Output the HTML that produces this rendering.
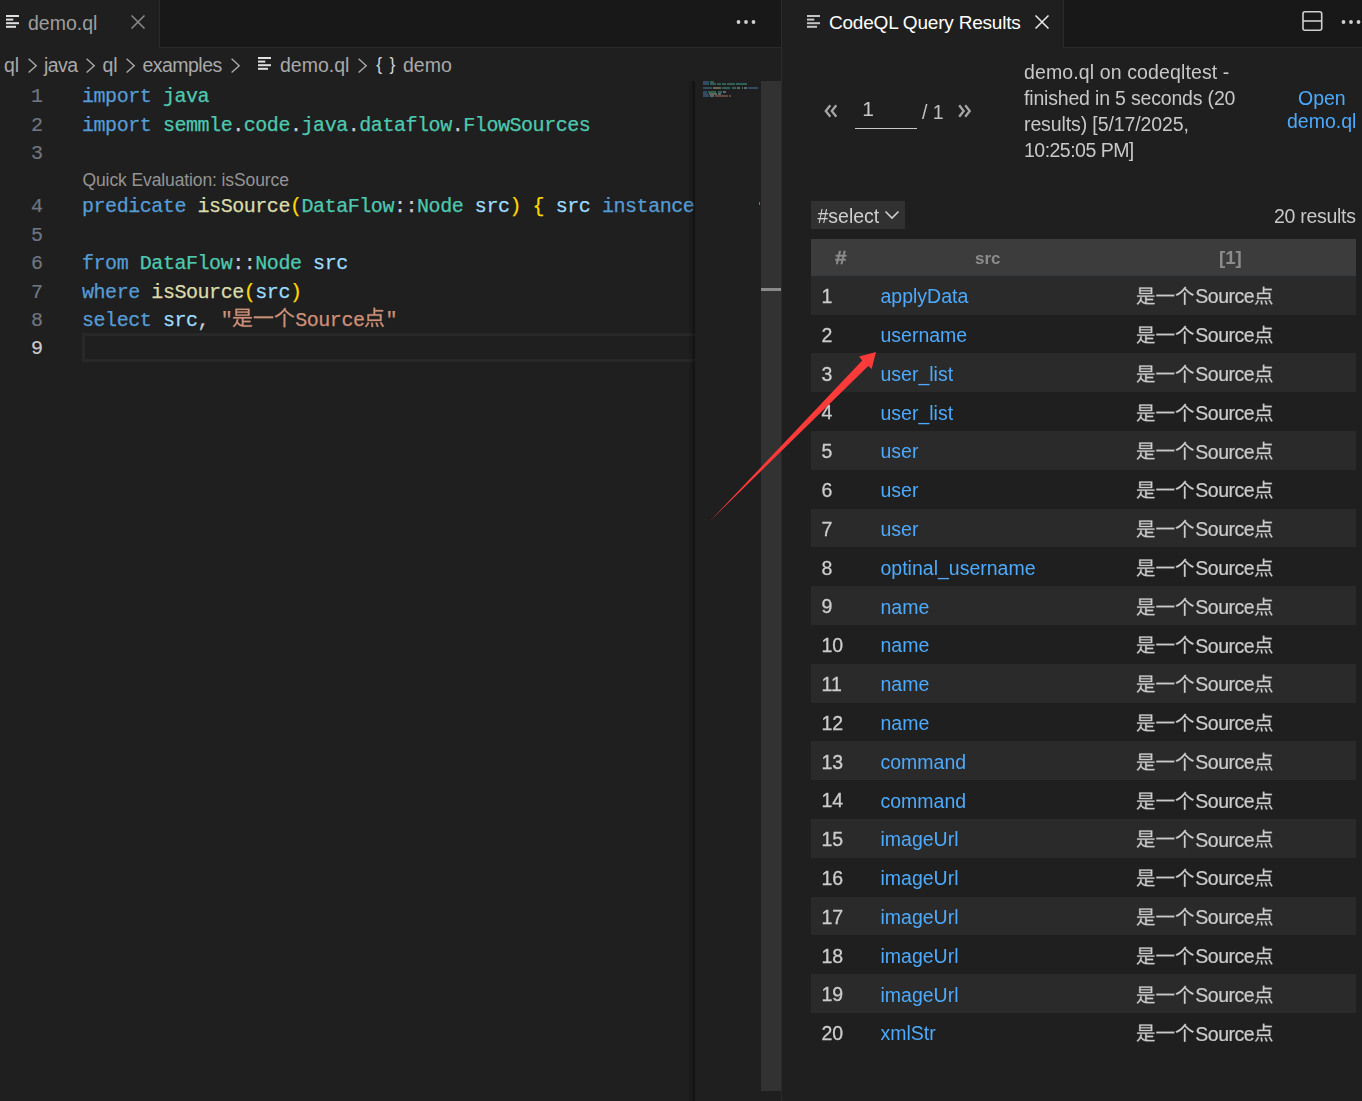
<!DOCTYPE html>
<html><head><meta charset="utf-8"><title>demo.ql</title>
<style>
html,body{margin:0;padding:0;background:#1f1f1f;}
body{width:1362px;height:1101px;position:relative;overflow:hidden;font-family:"Liberation Sans",sans-serif;color:#cccccc;}
div,span,svg{position:absolute;box-sizing:border-box;white-space:pre;}
.cl span{position:static}
#ltabs{left:0;top:0;width:781px;height:48px;background:#181818;border-bottom:1px solid #2b2b2b}
#ltab{left:0;top:0;width:160px;height:48px;background:#1f1f1f;border-right:1px solid #2b2b2b}
#divider{left:781px;top:0;width:1px;height:1101px;background:#2b2b2b}
.ln{left:0;width:42.5px;text-align:right;font-family:"Liberation Mono",monospace;font-size:20px;letter-spacing:-0.45px;line-height:28.5px;height:28.5px;color:#6e7681;-webkit-text-stroke-width:0.2px}
.ln.act{color:#cccccc}
.cl{left:82px;width:613px;overflow:hidden;font-family:"Liberation Mono",monospace;font-size:20px;letter-spacing:-0.45px;line-height:28.5px;height:28.5px;color:#cccccc;-webkit-text-stroke-width:0.25px}
.k{color:#569cd6}.t{color:#4ec9b0}.f{color:#dcdcaa}.v{color:#9cdcfe}.s{color:#ce9178}.y{color:#ffd700}.p{color:#cccccc}
.cl .cj{display:inline-block;height:1px}
#curline{left:82px;top:333px;width:613px;height:29px;border:3px solid #282828;border-right:none}
#mmshadow{left:688px;top:81px;width:7px;height:1020px;background:linear-gradient(90deg,rgba(0,0,0,0),rgba(0,0,0,.12) 40%,rgba(0,0,0,.45))}
#sbar{left:760.8px;top:81px;width:20.2px;height:1010px;background:#323232}
#sbarend{left:760px;top:1091px;width:21px;height:10px;background:#1f1f1f}
#cursormark{left:761px;top:288px;width:20px;height:3px;background:#8a8a8a}
#peek{left:759px;top:202px;width:1px;height:3px;background:#35927f}
.mm{height:2px;opacity:.55}
#rtabs{left:782px;top:0;width:580px;height:48px;background:#181818;border-bottom:1px solid #2b2b2b}
#rtab{left:0;top:0;width:282px;height:48px;background:#1f1f1f;border-right:1px solid #2b2b2b}
#webview{left:0;top:0;width:1362px;height:1101px;will-change:transform}
#uline{left:855px;top:127.9px;width:62px;height:1.5px;background:#c8c8c8}
#sel{left:811px;top:201px;width:94px;height:28px;background:#313131}
#thead{left:811px;top:239px;width:545px;height:36.75px;background:#3c3c3c;border-bottom:1px solid #363b40}
.row{left:811px;width:545px;height:38.8px}
.row.odd{background:#2a2a2a}
.row .num{left:10.5px;top:7.3px;-webkit-text-stroke:0.3px #cccccc;font-size:19.5px;line-height:26px;color:#cccccc}
.row .lk{left:69.5px;top:7.5px;font-size:19.5px;line-height:26px;color:#4daafc;letter-spacing:0px}
.row .src{left:384.3px;top:7.6px;-webkit-text-stroke:0.2px #cccccc;font-size:19.5px;line-height:26px;color:#cccccc;letter-spacing:-0.5px}
.row .cj1{left:324.6px;top:10.4px;width:58.5px;height:19.5px;fill:#cccccc;stroke:#cccccc;stroke-width:16}
.row .cj2{left:443px;top:10.4px;width:19.5px;height:19.5px;fill:#cccccc;stroke:#cccccc;stroke-width:16}
</style></head><body>
<svg width="0" height="0" style="left:0;top:0"><defs><symbol id="g1" viewBox="0 0 1000 1000"><path d="M236 273H757V355H236ZM236 138H757V219H236ZM164 81V412H833V81ZM231 581C205 727 141 840 35 909C52 920 81 948 92 961C158 914 210 850 248 771C330 909 459 940 661 940H935C939 919 951 886 963 868C911 869 702 870 664 869C622 869 582 868 546 864V726H878V660H546V548H943V481H59V548H471V851C384 829 320 782 281 690C291 659 299 626 306 591Z"/></symbol><symbol id="g2" viewBox="0 0 1000 1000"><path d="M44 449V531H960V449Z"/></symbol><symbol id="g3" viewBox="0 0 1000 1000"><path d="M460 334V959H538V334ZM506 39C406 206 224 352 35 434C56 452 78 481 91 503C245 428 393 312 501 174C634 330 766 426 914 504C926 480 949 452 969 436C815 361 673 267 545 114L573 70Z"/></symbol><symbol id="g4" viewBox="0 0 1000 1000"><path d="M237 415H760V594H237ZM340 752C353 817 361 901 361 951L437 941C436 893 426 810 411 746ZM547 753C576 815 606 899 617 949L690 930C678 880 646 799 615 738ZM751 745C801 808 857 897 880 952L951 922C926 867 868 782 818 719ZM177 725C146 799 95 880 42 926L110 959C165 906 216 822 248 744ZM166 344V664H835V344H530V217H910V146H530V40H455V344Z"/></symbol></defs></svg>
<div id="ltabs"><div id="ltab"></div></div>
<svg style="left:5.5px;top:15px" width="14" height="14" viewBox="0 0 14 14" fill="#e0e0e0"><rect x="0" y="0" width="13" height="2"/><rect x="0" y="3.6" width="7.3" height="2"/><rect x="0" y="7.2" width="13" height="2"/><rect x="0" y="10.8" width="10" height="2"/></svg><span id="ltxt" class="" style="left:28px;top:10.24px;font-size:19.5px;line-height:26px;height:26px;color:#9d9d9d;">demo.ql</span><svg style="left:130.5px;top:15.2px" width="14" height="14" viewBox="0 0 14 14" fill="none" stroke="#8c8c8c" stroke-width="1.5"><path d="M0.5 0.5 L13.5 13.5 M13.5 0.5 L0.5 13.5"/></svg><svg style="left:734px;top:18px" width="24" height="8" viewBox="0 0 24 8" fill="#d0d0d0"><circle cx="4.5" cy="4" r="1.9"/><circle cx="12" cy="4" r="1.9"/><circle cx="19.5" cy="4" r="1.9"/></svg><span id="b1" class="" style="left:4px;top:51.64px;font-size:19.5px;line-height:26px;height:26px;color:#a9a9a9;">ql</span><svg style="left:28px;top:57.8px" width="11" height="16" viewBox="0 0 11 16" fill="none" stroke="#a9a9a9" stroke-width="1.4"><path d="M0.6 0.8 L8.2 7.7 L0.6 14.6"/></svg><span id="b2" class="" style="left:44px;top:51.64px;font-size:19.5px;line-height:26px;height:26px;color:#a9a9a9;letter-spacing:-0.57px;">java</span><svg style="left:86px;top:57.8px" width="11" height="16" viewBox="0 0 11 16" fill="none" stroke="#a9a9a9" stroke-width="1.4"><path d="M0.6 0.8 L8.2 7.7 L0.6 14.6"/></svg><span id="b3" class="" style="left:102.5px;top:51.64px;font-size:19.5px;line-height:26px;height:26px;color:#a9a9a9;">ql</span><svg style="left:126px;top:57.8px" width="11" height="16" viewBox="0 0 11 16" fill="none" stroke="#a9a9a9" stroke-width="1.4"><path d="M0.6 0.8 L8.2 7.7 L0.6 14.6"/></svg><span id="b4" class="" style="left:142.4px;top:51.64px;font-size:19.5px;line-height:26px;height:26px;color:#a9a9a9;letter-spacing:-0.52px;">examples</span><svg style="left:230.5px;top:57.8px" width="11" height="16" viewBox="0 0 11 16" fill="none" stroke="#a9a9a9" stroke-width="1.4"><path d="M0.6 0.8 L8.2 7.7 L0.6 14.6"/></svg><svg style="left:257.5px;top:57.3px" width="14" height="14" viewBox="0 0 14 14" fill="#e0e0e0"><rect x="0" y="0" width="13" height="2"/><rect x="0" y="3.6" width="7.3" height="2"/><rect x="0" y="7.2" width="13" height="2"/><rect x="0" y="10.8" width="10" height="2"/></svg><span id="b5" class="" style="left:280px;top:51.64px;font-size:19.5px;line-height:26px;height:26px;color:#a9a9a9;">demo.ql</span><svg style="left:358px;top:57.8px" width="11" height="16" viewBox="0 0 11 16" fill="none" stroke="#a9a9a9" stroke-width="1.4"><path d="M0.6 0.8 L8.2 7.7 L0.6 14.6"/></svg><span id="b6" class="" style="left:376.3px;top:50.54px;font-size:17.5px;line-height:26px;height:26px;color:#d4d4d4;letter-spacing:1.2px;">{ }</span><span id="b7" class="" style="left:403px;top:51.64px;font-size:19.5px;line-height:26px;height:26px;color:#a9a9a9;">demo</span>
<div class="ln" style="top:83px">1</div><div class="cl" id="cl1" style="top:83px"><span class="k">import</span> <span class="t">java</span></div><div class="ln" style="top:111.5px">2</div><div class="cl" id="cl2" style="top:111.5px"><span class="k">import</span> <span class="t">semmle</span><span class="p">.</span><span class="t">code</span><span class="p">.</span><span class="t">java</span><span class="p">.</span><span class="t">dataflow</span><span class="p">.</span><span class="t">FlowSources</span></div><div class="ln" style="top:140px">3</div><div class="ln" style="top:193px">4</div><div class="cl" id="cl4" style="top:193px"><span class="k">predicate</span> <span class="f">isSource</span><span class="y">(</span><span class="t">DataFlow</span><span class="p">::</span><span class="t">Node</span> <span class="v">src</span><span class="y">)</span> <span class="y">{</span> <span class="v">src</span> <span class="k">instanceof</span> <span class="t">RemoteFlowSource</span> <span class="y">}</span></div><div class="ln" style="top:221.5px">5</div><div class="ln" style="top:250px">6</div><div class="cl" id="cl6" style="top:250px"><span class="k">from</span> <span class="t">DataFlow</span><span class="p">::</span><span class="t">Node</span> <span class="v">src</span></div><div class="ln" style="top:278.5px">7</div><div class="cl" id="cl7" style="top:278.5px"><span class="k">where</span> <span class="f">isSource</span><span class="y">(</span><span class="v">src</span><span class="y">)</span></div><div class="ln" style="top:307px">8</div><div class="cl" id="cl8" style="top:307px"><span class="k">select</span> <span class="v">src</span><span class="p">,</span> <span class="s">"</span><span class="cj" style="width:63px"></span><span class="s">Source</span><span class="cj" style="width:21px"></span><span class="s">"</span></div><div class="ln act" style="top:334.5px">9</div><svg id="cjc1" style="left:232.15px;top:307.4px;width:63px;height:21px;fill:#ce9178;stroke:#ce9178;stroke-width:16" viewBox="0 0 3000 1000"><use href="#g1" width="1000" height="1000"/><use href="#g2" x="1000" width="1000" height="1000"/><use href="#g3" x="2000" width="1000" height="1000"/></svg><svg id="cjc2" style="left:364.45px;top:307.4px;width:21px;height:21px;fill:#ce9178;stroke:#ce9178;stroke-width:16" viewBox="0 0 1000 1000"><use href="#g4" width="1000" height="1000"/></svg><div id="curline"></div><span id="lens" class="" style="left:82.5px;top:166.84px;font-size:17.5px;line-height:26px;height:26px;color:#949494;letter-spacing:-0.11px;">Quick Evaluation: isSource</span>
<div id="mmshadow"></div><div id="sbar"></div><div id="sbarend"></div><div id="cursormark"></div><div id="peek"></div><div class="mm" style="left:703.0px;top:81.0px;width:6.0px;background:#3f6f99"></div><div class="mm" style="left:710.0px;top:81.0px;width:4.0px;background:#3a9383"></div><div class="mm" style="left:703.0px;top:83.0px;width:6.0px;background:#3f6f99"></div><div class="mm" style="left:710.0px;top:83.0px;width:6.0px;background:#3a9383"></div><div class="mm" style="left:717.0px;top:83.0px;width:4.0px;background:#3a9383"></div><div class="mm" style="left:722.0px;top:83.0px;width:4.0px;background:#3a9383"></div><div class="mm" style="left:727.0px;top:83.0px;width:8.0px;background:#3a9383"></div><div class="mm" style="left:736.0px;top:83.0px;width:11.0px;background:#3a9383"></div><div class="mm" style="left:703.0px;top:87.0px;width:9.0px;background:#3f6f99"></div><div class="mm" style="left:713.0px;top:87.0px;width:8.0px;background:#9f9f7d"></div><div class="mm" style="left:722.0px;top:87.0px;width:8.0px;background:#3a9383"></div><div class="mm" style="left:732.0px;top:87.0px;width:4.0px;background:#3a9383"></div><div class="mm" style="left:737.0px;top:87.0px;width:3.0px;background:#7aa6c0"></div><div class="mm" style="left:742.0px;top:87.0px;width:1.0px;background:#b09a10"></div><div class="mm" style="left:744.0px;top:87.0px;width:3.0px;background:#7aa6c0"></div><div class="mm" style="left:748.0px;top:87.0px;width:10.0px;background:#3f6f99"></div><div class="mm" style="left:703.0px;top:91.0px;width:4.0px;background:#3f6f99"></div><div class="mm" style="left:708.0px;top:91.0px;width:8.0px;background:#3a9383"></div><div class="mm" style="left:718.0px;top:91.0px;width:4.0px;background:#3a9383"></div><div class="mm" style="left:723.0px;top:91.0px;width:3.0px;background:#7aa6c0"></div><div class="mm" style="left:703.0px;top:93.0px;width:5.0px;background:#3f6f99"></div><div class="mm" style="left:709.0px;top:93.0px;width:8.0px;background:#9f9f7d"></div><div class="mm" style="left:718.0px;top:93.0px;width:3.0px;background:#7aa6c0"></div><div class="mm" style="left:703.0px;top:95.0px;width:6.0px;background:#3f6f99"></div><div class="mm" style="left:710.0px;top:95.0px;width:4.0px;background:#7aa6c0"></div><div class="mm" style="left:715.0px;top:95.0px;width:1.0px;background:#96695a"></div><div class="mm" style="left:716.0px;top:95.0px;width:6.0px;background:#96695a"></div><div class="mm" style="left:722.0px;top:95.0px;width:6.0px;background:#96695a"></div><div class="mm" style="left:729.0px;top:95.0px;width:2.0px;background:#96695a"></div>
<div id="divider"></div>
<div id="rtabs"><div id="rtab"></div></div>
<svg style="left:807px;top:15.3px" width="14" height="14" viewBox="0 0 14 14" fill="#c5c5c5"><rect x="0" y="0" width="13" height="2"/><rect x="0" y="3.6" width="7.3" height="2"/><rect x="0" y="7.2" width="13" height="2"/><rect x="0" y="10.8" width="10" height="2"/></svg><span id="rtxt" class="" style="left:829px;top:10.42px;font-size:19px;line-height:26px;height:26px;color:#ffffff;letter-spacing:-0.21px;">CodeQL Query Results</span><svg style="left:1035px;top:15.3px" width="14" height="14" viewBox="0 0 14 14" fill="none" stroke="#ececec" stroke-width="1.5"><path d="M0.5 0.5 L13.5 13.5 M13.5 0.5 L0.5 13.5"/></svg><svg style="left:1301px;top:10px" width="23" height="23" viewBox="0 0 23 23" fill="none" stroke="#d0d0d0" stroke-width="1.6"><rect x="2" y="1.75" width="18.7" height="18.5" rx="2"/><path d="M2 11 H20.7"/></svg><svg style="left:1338.5px;top:18px" width="24" height="8" viewBox="0 0 24 8" fill="#d0d0d0"><circle cx="4.5" cy="4" r="1.9"/><circle cx="12" cy="4" r="1.9"/><circle cx="19.5" cy="4" r="1.9"/></svg>
<div id="webview"><svg style="left:823px;top:104px" width="15" height="14" viewBox="823 104 15 14" fill="none" stroke="#a6a6a6" stroke-width="2.3"><path d="M830.3 105.3 L825.8 111 L830.3 116.7 M836.3 105.3 L831.8 111 L836.3 116.7"/></svg><span id="pg" class="" style="left:862.3px;top:95.92px;font-size:21px;line-height:26px;height:26px;color:#c8c8c8;">1</span><div id="uline"></div><span id="of" class="" style="left:922px;top:98.64px;font-size:19.5px;line-height:26px;height:26px;color:#c0c0c0;">/ 1</span><svg style="left:957px;top:104px" width="15" height="14" viewBox="957 104 15 14" fill="none" stroke="#a6a6a6" stroke-width="2.3"><path d="M959.2 105.3 L963.7 111 L959.2 116.7 M965.2 105.3 L969.7 111 L965.2 116.7"/></svg><span id="m1" class="" style="left:1024px;top:58.84px;font-size:19.5px;line-height:26px;height:26px;color:#c8c8c8;letter-spacing:0.12px;">demo.ql on codeqltest -</span><span id="m2" class="" style="left:1024px;top:84.84px;font-size:19.5px;line-height:26px;height:26px;color:#c8c8c8;letter-spacing:-0.18px;">finished in 5 seconds (20</span><span id="m3" class="" style="left:1024px;top:110.84px;font-size:19.5px;line-height:26px;height:26px;color:#c8c8c8;letter-spacing:-0.11px;">results) [5/17/2025,</span><span id="m4" class="" style="left:1024px;top:136.84px;font-size:19.5px;line-height:26px;height:26px;color:#c8c8c8;letter-spacing:-0.52px;">10:25:05 PM]</span><span id="o1" class="" style="left:1298px;top:84.84px;font-size:19.5px;line-height:26px;height:26px;color:#4daafc;">Open</span><span id="o2" class="" style="left:1287px;top:107.64px;font-size:19.5px;line-height:26px;height:26px;color:#4daafc;">demo.ql</span><div id="sel"></div><span id="seltxt" class="" style="left:817.5px;top:203.24px;font-size:19.5px;line-height:26px;height:26px;color:#d0d0d0;">#select</span><svg style="left:884px;top:210px" width="16" height="10" viewBox="0 0 16 10" fill="none" stroke="#d0d0d0" stroke-width="1.6"><path d="M1.5 1.5 L8 8 L14.5 1.5"/></svg><span id="nres" class="" style="left:1274px;top:203.14px;font-size:19.5px;line-height:26px;height:26px;color:#c8c8c8;letter-spacing:-0.29px;">20 results</span><div id="thead"></div><span id="h1" class="" style="left:835.3px;top:245.19px;font-size:18.5px;line-height:26px;height:26px;color:#8c8c8c;font-weight:bold;transform:scaleX(1.12);transform-origin:0 0;-webkit-text-stroke:0.4px #8c8c8c;">#</span><span id="h2" class="" style="left:975px;top:246.01px;font-size:17px;line-height:26px;height:26px;color:#8c8c8c;font-weight:bold;">src</span><span id="h3" class="" style="left:1219px;top:245.42px;font-size:18.7px;line-height:26px;height:26px;color:#8c8c8c;font-weight:bold;">[1]</span>
<div class="row odd" style="top:275.75px"><span class="num">1</span><span class="lk">applyData</span><svg class="cj1" viewBox="0 0 3000 1000"><use href="#g1" width="1000" height="1000"/><use href="#g2" x="1000" width="1000" height="1000"/><use href="#g3" x="2000" width="1000" height="1000"/></svg><span class="src">Source</span><svg class="cj2" viewBox="0 0 1000 1000"><use href="#g4" width="1000" height="1000"/></svg></div><div class="row" style="top:314.55px"><span class="num">2</span><span class="lk">username</span><svg class="cj1" viewBox="0 0 3000 1000"><use href="#g1" width="1000" height="1000"/><use href="#g2" x="1000" width="1000" height="1000"/><use href="#g3" x="2000" width="1000" height="1000"/></svg><span class="src">Source</span><svg class="cj2" viewBox="0 0 1000 1000"><use href="#g4" width="1000" height="1000"/></svg></div><div class="row odd" style="top:353.35px"><span class="num">3</span><span class="lk">user_list</span><svg class="cj1" viewBox="0 0 3000 1000"><use href="#g1" width="1000" height="1000"/><use href="#g2" x="1000" width="1000" height="1000"/><use href="#g3" x="2000" width="1000" height="1000"/></svg><span class="src">Source</span><svg class="cj2" viewBox="0 0 1000 1000"><use href="#g4" width="1000" height="1000"/></svg></div><div class="row" style="top:392.15px"><span class="num">4</span><span class="lk">user_list</span><svg class="cj1" viewBox="0 0 3000 1000"><use href="#g1" width="1000" height="1000"/><use href="#g2" x="1000" width="1000" height="1000"/><use href="#g3" x="2000" width="1000" height="1000"/></svg><span class="src">Source</span><svg class="cj2" viewBox="0 0 1000 1000"><use href="#g4" width="1000" height="1000"/></svg></div><div class="row odd" style="top:430.95px"><span class="num">5</span><span class="lk">user</span><svg class="cj1" viewBox="0 0 3000 1000"><use href="#g1" width="1000" height="1000"/><use href="#g2" x="1000" width="1000" height="1000"/><use href="#g3" x="2000" width="1000" height="1000"/></svg><span class="src">Source</span><svg class="cj2" viewBox="0 0 1000 1000"><use href="#g4" width="1000" height="1000"/></svg></div><div class="row" style="top:469.75px"><span class="num">6</span><span class="lk">user</span><svg class="cj1" viewBox="0 0 3000 1000"><use href="#g1" width="1000" height="1000"/><use href="#g2" x="1000" width="1000" height="1000"/><use href="#g3" x="2000" width="1000" height="1000"/></svg><span class="src">Source</span><svg class="cj2" viewBox="0 0 1000 1000"><use href="#g4" width="1000" height="1000"/></svg></div><div class="row odd" style="top:508.54999999999995px"><span class="num">7</span><span class="lk">user</span><svg class="cj1" viewBox="0 0 3000 1000"><use href="#g1" width="1000" height="1000"/><use href="#g2" x="1000" width="1000" height="1000"/><use href="#g3" x="2000" width="1000" height="1000"/></svg><span class="src">Source</span><svg class="cj2" viewBox="0 0 1000 1000"><use href="#g4" width="1000" height="1000"/></svg></div><div class="row" style="top:547.3499999999999px"><span class="num">8</span><span class="lk">optinal_username</span><svg class="cj1" viewBox="0 0 3000 1000"><use href="#g1" width="1000" height="1000"/><use href="#g2" x="1000" width="1000" height="1000"/><use href="#g3" x="2000" width="1000" height="1000"/></svg><span class="src">Source</span><svg class="cj2" viewBox="0 0 1000 1000"><use href="#g4" width="1000" height="1000"/></svg></div><div class="row odd" style="top:586.15px"><span class="num">9</span><span class="lk">name</span><svg class="cj1" viewBox="0 0 3000 1000"><use href="#g1" width="1000" height="1000"/><use href="#g2" x="1000" width="1000" height="1000"/><use href="#g3" x="2000" width="1000" height="1000"/></svg><span class="src">Source</span><svg class="cj2" viewBox="0 0 1000 1000"><use href="#g4" width="1000" height="1000"/></svg></div><div class="row" style="top:624.95px"><span class="num">10</span><span class="lk">name</span><svg class="cj1" viewBox="0 0 3000 1000"><use href="#g1" width="1000" height="1000"/><use href="#g2" x="1000" width="1000" height="1000"/><use href="#g3" x="2000" width="1000" height="1000"/></svg><span class="src">Source</span><svg class="cj2" viewBox="0 0 1000 1000"><use href="#g4" width="1000" height="1000"/></svg></div><div class="row odd" style="top:663.75px"><span class="num">11</span><span class="lk">name</span><svg class="cj1" viewBox="0 0 3000 1000"><use href="#g1" width="1000" height="1000"/><use href="#g2" x="1000" width="1000" height="1000"/><use href="#g3" x="2000" width="1000" height="1000"/></svg><span class="src">Source</span><svg class="cj2" viewBox="0 0 1000 1000"><use href="#g4" width="1000" height="1000"/></svg></div><div class="row" style="top:702.55px"><span class="num">12</span><span class="lk">name</span><svg class="cj1" viewBox="0 0 3000 1000"><use href="#g1" width="1000" height="1000"/><use href="#g2" x="1000" width="1000" height="1000"/><use href="#g3" x="2000" width="1000" height="1000"/></svg><span class="src">Source</span><svg class="cj2" viewBox="0 0 1000 1000"><use href="#g4" width="1000" height="1000"/></svg></div><div class="row odd" style="top:741.3499999999999px"><span class="num">13</span><span class="lk">command</span><svg class="cj1" viewBox="0 0 3000 1000"><use href="#g1" width="1000" height="1000"/><use href="#g2" x="1000" width="1000" height="1000"/><use href="#g3" x="2000" width="1000" height="1000"/></svg><span class="src">Source</span><svg class="cj2" viewBox="0 0 1000 1000"><use href="#g4" width="1000" height="1000"/></svg></div><div class="row" style="top:780.15px"><span class="num">14</span><span class="lk">command</span><svg class="cj1" viewBox="0 0 3000 1000"><use href="#g1" width="1000" height="1000"/><use href="#g2" x="1000" width="1000" height="1000"/><use href="#g3" x="2000" width="1000" height="1000"/></svg><span class="src">Source</span><svg class="cj2" viewBox="0 0 1000 1000"><use href="#g4" width="1000" height="1000"/></svg></div><div class="row odd" style="top:818.9499999999999px"><span class="num">15</span><span class="lk">imageUrl</span><svg class="cj1" viewBox="0 0 3000 1000"><use href="#g1" width="1000" height="1000"/><use href="#g2" x="1000" width="1000" height="1000"/><use href="#g3" x="2000" width="1000" height="1000"/></svg><span class="src">Source</span><svg class="cj2" viewBox="0 0 1000 1000"><use href="#g4" width="1000" height="1000"/></svg></div><div class="row" style="top:857.75px"><span class="num">16</span><span class="lk">imageUrl</span><svg class="cj1" viewBox="0 0 3000 1000"><use href="#g1" width="1000" height="1000"/><use href="#g2" x="1000" width="1000" height="1000"/><use href="#g3" x="2000" width="1000" height="1000"/></svg><span class="src">Source</span><svg class="cj2" viewBox="0 0 1000 1000"><use href="#g4" width="1000" height="1000"/></svg></div><div class="row odd" style="top:896.55px"><span class="num">17</span><span class="lk">imageUrl</span><svg class="cj1" viewBox="0 0 3000 1000"><use href="#g1" width="1000" height="1000"/><use href="#g2" x="1000" width="1000" height="1000"/><use href="#g3" x="2000" width="1000" height="1000"/></svg><span class="src">Source</span><svg class="cj2" viewBox="0 0 1000 1000"><use href="#g4" width="1000" height="1000"/></svg></div><div class="row" style="top:935.3499999999999px"><span class="num">18</span><span class="lk">imageUrl</span><svg class="cj1" viewBox="0 0 3000 1000"><use href="#g1" width="1000" height="1000"/><use href="#g2" x="1000" width="1000" height="1000"/><use href="#g3" x="2000" width="1000" height="1000"/></svg><span class="src">Source</span><svg class="cj2" viewBox="0 0 1000 1000"><use href="#g4" width="1000" height="1000"/></svg></div><div class="row odd" style="top:974.15px"><span class="num">19</span><span class="lk">imageUrl</span><svg class="cj1" viewBox="0 0 3000 1000"><use href="#g1" width="1000" height="1000"/><use href="#g2" x="1000" width="1000" height="1000"/><use href="#g3" x="2000" width="1000" height="1000"/></svg><span class="src">Source</span><svg class="cj2" viewBox="0 0 1000 1000"><use href="#g4" width="1000" height="1000"/></svg></div><div class="row" style="top:1012.9499999999999px"><span class="num">20</span><span class="lk">xmlStr</span><svg class="cj1" viewBox="0 0 3000 1000"><use href="#g1" width="1000" height="1000"/><use href="#g2" x="1000" width="1000" height="1000"/><use href="#g3" x="2000" width="1000" height="1000"/></svg><span class="src">Source</span><svg class="cj2" viewBox="0 0 1000 1000"><use href="#g4" width="1000" height="1000"/></svg></div></div>
<svg id="arrow" style="left:700px;top:340px" width="200" height="200" viewBox="700 340 200 200"><polygon fill="#fb3a3a" points="710,521 862.2,360.4 859.1,356.4 876,352 871.7,369 868.2,365.9"/></svg>
</body></html>
